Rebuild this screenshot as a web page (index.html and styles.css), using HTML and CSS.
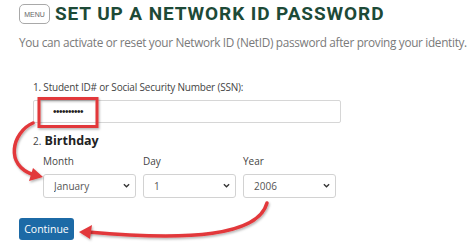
FILE: index.html
```html
<!DOCTYPE html>
<html>
<head>
  <title>Set Up a Network ID Password</title>
  <link rel="stylesheet" href="styles.css">
</head>
<body>
  <div class="page">
    <div class="header">
      <button class="menu-button">MENU</button>
      <h1 class="title">SET UP A NETWORK ID PASSWORD</h1>
    </div>
    <p class="intro">You can activate or reset your Network ID (NetID) password after proving your identity.</p>

    <div class="form">
      <label class="field-label" for="student-id">1. Student ID# or Social Security Number (SSN):</label>
      <input type="text" id="student-id" class="text-input" value="••••••••••">

      <div class="section-title"><span class="num">2.</span> Birthday</div>
      <div class="birthday">
        <div class="bday-field">
          <span class="small-label">Month</span>
          <div class="select-wrap month">
            <select><option>January</option></select>
            <svg class="chev" viewBox="0 0 8 5" width="7" height="5"><path d="M1 1 L4 4 L7 1" fill="none" stroke="#333" stroke-width="1.5"/></svg>
          </div>
        </div>
        <div class="bday-field">
          <span class="small-label">Day</span>
          <div class="select-wrap">
            <select><option>1</option></select>
            <svg class="chev" viewBox="0 0 8 5" width="7" height="5"><path d="M1 1 L4 4 L7 1" fill="none" stroke="#333" stroke-width="1.5"/></svg>
          </div>
        </div>
        <div class="bday-field">
          <span class="small-label">Year</span>
          <div class="select-wrap">
            <select><option>2006</option></select>
            <svg class="chev" viewBox="0 0 8 5" width="7" height="5"><path d="M1 1 L4 4 L7 1" fill="none" stroke="#333" stroke-width="1.5"/></svg>
          </div>
        </div>
      </div>
    </div>

    <button class="continue-button">Continue</button>
  </div>

  <!-- annotation layer: red box and arrows -->
  <svg class="annotations" width="474" height="249" viewBox="0 0 474 249">
    <defs>
      <filter id="soft" x="-20%" y="-20%" width="140%" height="140%">
        <feDropShadow dx="1" dy="1.5" stdDeviation="1" flood-color="#000" flood-opacity="0.3"/>
      </filter>
    </defs>
    <g filter="url(#soft)" stroke="#e2383b" fill="none" stroke-linecap="round">
      <rect x="39" y="98.5" width="58" height="28" stroke-width="3"/>
      <path d="M33 123 C 12 132, 4 166, 34 175" stroke-width="3.5"/>
      <path d="M267 203 C 258 236, 190 241, 88 232" stroke-width="3.5"/>
    </g>
    <g filter="url(#soft)" fill="#e2383b">
      <polygon points="43,177 29,181 33,168"/>
      <polygon points="79,232 92,225 90,239"/>
    </g>
  </svg>
</body>
</html>
```

FILE: styles.css
```css
body {
  margin: 0;
  background-color: #fff;
  font-family: "Open Sans", Arial, sans-serif;
  width: 474px;
  height: 249px;
  overflow: hidden;
  position: relative;
}

.page {
  padding: 4px 0 0 19px;
}

.header {
  display: flex;
  align-items: center;
  gap: 5px;
  height: 20px;
}

.menu-button {
  width: 31px;
  height: 20px;
  padding: 0;
  border: 1px solid #a9a9a9;
  border-radius: 5px;
  background: #fff;
  color: #666;
  font-family: Arial, sans-serif;
  font-size: 7px;
}

.title {
  margin: 0;
  font-family: Roboto, Arial, sans-serif;
  font-weight: 700;
  font-size: 19px;
  letter-spacing: 0.9px;
  color: #1d4a37;
  line-height: 20px;
}

.intro {
  margin: 10px 0 0;
  font-size: 11.8px;
  letter-spacing: -0.32px;
  line-height: 16px;
  white-space: nowrap;
  color: #7a7a7a;
}

.form {
  padding-left: 14px;
  margin-top: 30px;
}

.field-label {
  display: block;
  font-size: 10px;
  letter-spacing: -0.2px;
  line-height: 14px;
  color: #444;
}

.text-input {
  display: block;
  box-sizing: border-box;
  width: 308px;
  height: 23px;
  margin-top: 6px;
  padding: 0 0 0 19px;
  border: 1px solid #d6d6d6;
  border-radius: 2px;
  font-family: Arial, sans-serif;
  font-size: 10px;
  letter-spacing: -0.5px;
  color: #222;
}

.section-title {
  margin-top: 10px;
  font-size: 12.5px;
  font-weight: 700;
  line-height: 16px;
  color: #222;
}

.section-title .num {
  font-size: 10px;
  font-weight: 400;
  color: #444;
}

.birthday {
  display: flex;
  gap: 7px;
  padding-left: 10px;
  margin-top: 5px;
}

.bday-field {
  display: flex;
  flex-direction: column;
  gap: 5px;
}

.small-label {
  font-size: 10px;
  line-height: 14px;
  color: #444;
}

.select-wrap {
  position: relative;
  width: 93px;
}

.select-wrap select {
  appearance: none;
  -webkit-appearance: none;
  box-sizing: border-box;
  width: 100%;
  height: 24px;
  padding: 0 0 0 10px;
  border: 1px solid #d2d2d2;
  border-radius: 3px;
  background: #fff;
  font-family: "Open Sans", Arial, sans-serif;
  font-size: 10px;
  color: #555;
}

.select-wrap .chev {
  position: absolute;
  right: 6px;
  top: 10px;
}

.continue-button {
  display: block;
  margin-top: 20px;
  width: 55px;
  height: 22px;
  padding: 0;
  border: none;
  border-radius: 3px;
  background-color: #1c6aa6;
  color: #fff;
  font-family: "Open Sans", Arial, sans-serif;
  font-size: 10.5px;
}

.annotations {
  position: absolute;
  top: 0;
  left: 0;
  pointer-events: none;
}
```
